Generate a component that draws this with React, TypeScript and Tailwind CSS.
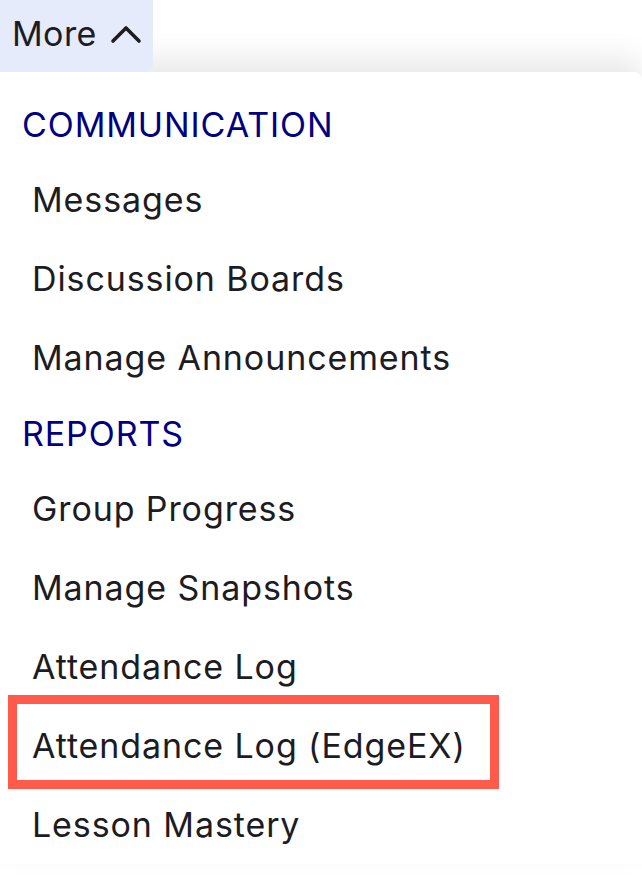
type MenuSection = {
    title: string
    items: string[]
}

const sections: MenuSection[] = [
    {
        title: 'COMMUNICATION',
        items: ['Messages', 'Discussion Boards', 'Manage Announcements'],
    },
    {
        title: 'REPORTS',
        items: [
            'Group Progress',
            'Manage Snapshots',
            'Attendance Log',
            'Attendance Log (EdgeEX)',
            'Lesson Mastery',
        ],
    },
]

const highlighted = 'Attendance Log (EdgeEX)'

const Chevron = (): JSX.Element => (
    <svg width="32" height="20" viewBox="0 0 32 20" fill="none" className="shrink-0">
        <polyline
            points="3,17 16,4 29,17"
            stroke="#1c1c22"
            strokeWidth="3.6"
            strokeLinecap="round"
            strokeLinejoin="round"
        />
    </svg>
)

const MenuItem = ({ label }: { label: string }): JSX.Element => {
    return (
        <div className="relative flex h-[79px] items-center pl-8 text-[34px] tracking-[0.9px] text-[#1c1c22]">
            {label === highlighted && (
                <span className="pointer-events-none absolute top-[-11px] bottom-[-4px] left-2 w-[491px] border-[9px] border-[#ff5a4c]" />
            )}
            <span>{label}</span>
        </div>
    )
}

const App = (): JSX.Element => {
    return (
        <div
            className="relative h-[878px] w-[642px] overflow-hidden bg-white"
            style={{ fontFamily: 'Inter, "Noto Sans", sans-serif' }}
        >
            <button className="relative z-10 flex h-[72px] w-[153px] items-center gap-[13px] rounded-br-lg bg-[#e6ebfb] pb-[5px] pl-3 text-[34px] tracking-[0.4px] text-[#1c1c22]">
                <span>More</span>
                <Chevron />
            </button>
            <div className="flex flex-col rounded-tr-lg bg-white pt-4 shadow-[0_-14px_30px_rgba(0,0,0,0.09)]">
                {sections.map((section) => (
                    <div key={section.title} className="flex flex-col">
                        <div className="flex h-[72px] items-center pl-[22px] text-[34px] tracking-[0.9px] text-[#000080]">
                            {section.title}
                        </div>
                        {section.items.map((item) => (
                            <MenuItem key={item} label={item} />
                        ))}
                    </div>
                ))}
            </div>
        </div>
    )
}

export default App
